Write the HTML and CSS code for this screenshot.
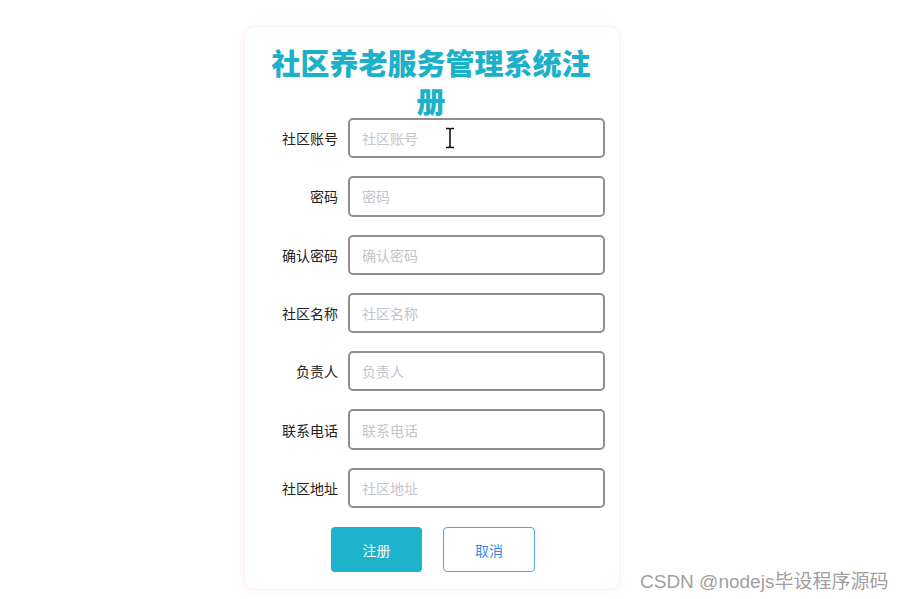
FILE: index.html
```html
<!DOCTYPE html>
<html lang="zh-CN">
<head>
    <meta charset="UTF-8">
    <meta name="viewport" content="width=device-width, initial-scale=1.0">
    <title>社区养老服务管理系统注册</title>
    <link rel="stylesheet" href="styles.css">
</head>
<body>

<div class="register-box">
    <h1 class="title">社区养老服务管理系统注册</h1>
    <form class="register-form" onsubmit="return false">
        <div class="form-row">
            <label>社区账号</label>
            <div class="input-wrap">
                <input type="text" placeholder="社区账号">
                <svg class="ibeam" width="10" height="22" viewBox="0 0 10 22">
                    <path d="M1 1.5h3l1 1 1-1h3M5 2.5v17M1 20.5h3l1-1 1 1h3" fill="none" stroke="#111" stroke-width="1.6"/>
                </svg>
            </div>
        </div>
        <div class="form-row">
            <label>密码</label>
            <input type="password" placeholder="密码">
        </div>
        <div class="form-row">
            <label>确认密码</label>
            <input type="password" placeholder="确认密码">
        </div>
        <div class="form-row">
            <label>社区名称</label>
            <input type="text" placeholder="社区名称">
        </div>
        <div class="form-row">
            <label>负责人</label>
            <input type="text" placeholder="负责人">
        </div>
        <div class="form-row">
            <label>联系电话</label>
            <input type="text" placeholder="联系电话">
        </div>
        <div class="form-row">
            <label>社区地址</label>
            <input type="text" placeholder="社区地址">
        </div>
        <div class="actions">
            <button class="btn btn-primary">注册</button>
            <button class="btn btn-plain">取消</button>
        </div>
    </form>
</div>

<div class="watermark">CSDN @nodejs毕设程序源码</div>

</body>
</html>
```

FILE: styles.css
```css
body {
    font-family: "Noto Sans CJK SC", "Noto Sans", sans-serif;
    background-color: #fff;
    margin: 0;
    padding: 26px 0 0 244px;
    height: 599px;
    box-sizing: border-box;
    overflow: hidden;
}
.register-box {
    width: 376px;
    box-sizing: border-box;
    padding: 16px 14px 17px 12px;
    border: 1px solid #fdf0ee;
    border-radius: 10px;
    box-shadow: 0 0 6px rgba(250, 200, 195, 0.25);
    background: #fff;
}
.title {
    margin: 0 2px 0 2px;
    font-size: 29px;
    line-height: 38px;
    font-weight: 900;
    color: #1cb0c9;
    text-align: center;
}
.register-form {
    display: flex;
    flex-direction: column;
    gap: 18px;
    margin-top: -1px;
}
.form-row {
    display: grid;
    grid-template-columns: 81px 257px;
    column-gap: 10px;
    align-items: center;
}
.form-row label {
    text-align: right;
    font-size: 14px;
    color: #222;
}
.input-wrap {
    position: relative;
}
.form-row input {
    width: 257px;
    height: 40.3px;
    box-sizing: border-box;
    border: 2px solid #8f8f8f;
    border-radius: 5px;
    padding: 0 12px;
    font-family: inherit;
    font-size: 14px;
    color: #333;
    outline: none;
    background: #fff;
}
.form-row input::placeholder {
    color: #c2c5cc;
}
.ibeam {
    position: absolute;
    left: 97px;
    top: 9px;
}
.actions {
    display: flex;
    justify-content: center;
    gap: 21px;
    margin-top: 1px;
    padding-left: 4px;
}
.btn {
    width: 91px;
    height: 45px;
    border-radius: 4px;
    font-family: inherit;
    font-size: 14px;
    cursor: pointer;
}
.btn-primary {
    background: #1db3cc;
    border: none;
    color: #fff;
}
.btn-plain {
    width: 92px;
    background: #fff;
    border: 1.6px solid #5a9ef2;
    color: #3a8be8;
}
.watermark {
    position: absolute;
    left: 640px;
    top: 566px;
    font-family: "Liberation Sans", "Noto Sans CJK SC", sans-serif;
    font-size: 19px;
    color: #a0a0a0;
    white-space: nowrap;
}
```
